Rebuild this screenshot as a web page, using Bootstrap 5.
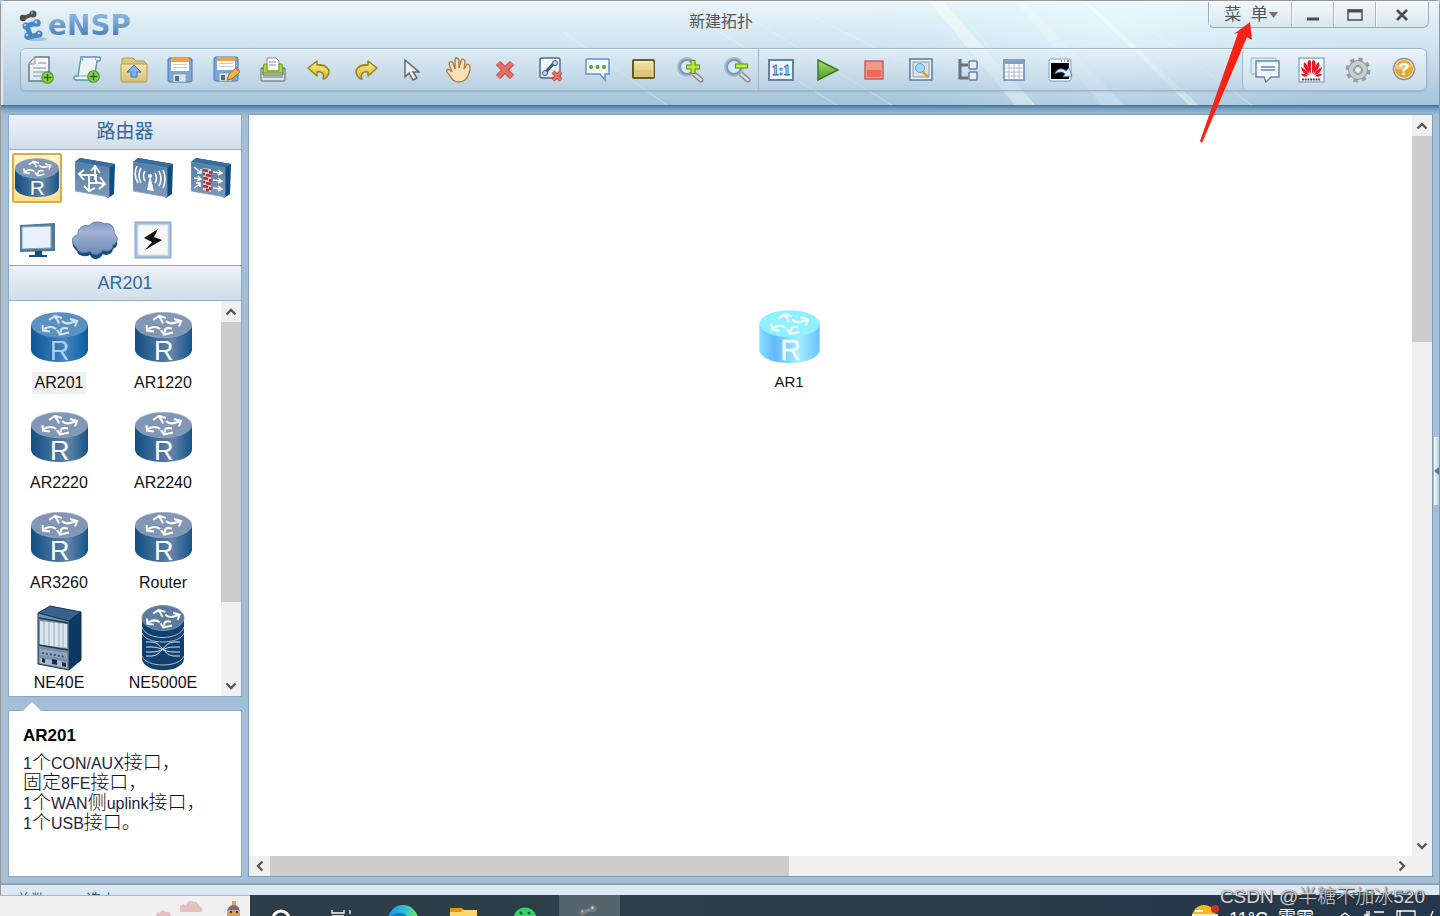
<!DOCTYPE html>
<html lang="zh-CN">
<head>
<meta charset="utf-8">
<meta name="viewport" content="width=device-width, initial-scale=1">
<title>eNSP</title>
<link href="https://cdn.jsdelivr.net/npm/bootstrap@5.3.0/dist/css/bootstrap.min.css" rel="stylesheet">
<style>
body{font-family:"Liberation Sans","Noto Sans CJK SC",sans-serif;font-size:16px;line-height:20px;color:#111;background:#a3bfd7}
button{border:0;background:none;padding:0;color:inherit}
svg{display:block;flex:none}
.app-window{border:1px solid #969696;border-width:1px 1px 0;border-radius:6px 6px 0 0}
.app-head{height:104px;background:linear-gradient(#e9f5fa,#cfe2ee 45%,#b9d1e3 75%,#a5c3db);border-top:1px solid #fff;border-left:2px solid #dcebf4}
.head-row{height:46px}
.head-side{flex:1 1 0}
.streaks{right:0;top:0;width:100%;height:100%}
.brand{font:bold 28px/32px "DejaVu Sans",sans-serif;background:linear-gradient(#86b1de 20%,#4f82ba 80%);-webkit-background-clip:text;background-clip:text;color:transparent}
.doc-title{color:#555;padding-top:10px}
.win-controls{border:1px solid #a0acb5;border-top:0;border-radius:0 0 6px 6px;background:linear-gradient(#f2f8fb,#d8e6ef);height:26px;margin-right:10px;color:#50545a}
.win-controls button{width:42px;display:flex;align-items:center;justify-content:center;border-left:1px solid #a9b7c1;box-shadow:inset 1px 0 #f7fbfd}
.win-controls .menu-btn{width:82px;border-left:0;gap:1px;font-size:17px;padding-left:2px}
.win-controls .close-btn{width:53px}
.toolbar{margin:0 12px 0 17px;height:43px;border:1px solid #9fb7ca;border-radius:6px;background:linear-gradient(rgba(232,243,249,.6),rgba(190,212,228,.5));box-shadow:inset 0 1px rgba(255,255,255,.7),0 1px 2px rgba(110,145,175,.4)}
.tools{display:flex;justify-content:space-between;align-items:center;height:100%}
.tools button{width:30px;height:30px;display:flex;align-items:center;justify-content:center}
.edit-tools{width:738px;padding:0 6px 0 5px;border-right:1px solid #a1b5c6}
.sim-tools{width:317px;padding:0 0 0 7px}
.help-tools{width:184px;padding:0 6px 0 7px;border-left:1px solid #9fb7ca;border-radius:5px;background:linear-gradient(rgba(240,247,251,.6),rgba(215,228,238,.5))}
.work-area{background:linear-gradient(#4f80a5,#79a0be 3px,#a3bfd7 9px);padding:8px 6px 6px 7px;border-top:1px solid #50748d;min-height:0}
.side{width:234px}
.side-box{background:#fff;border:1px solid #8ea8c3;min-height:0}
.side-title{height:35px;line-height:34px;font-size:18px;color:#376798;background:linear-gradient(#edf2f9,#d0deea);border-bottom:1px solid #98aec2}
.side-title.kind-title{font-size:19px}
.kinds{display:grid;grid-template-columns:repeat(4,50px);grid-auto-rows:50px;gap:12px 8px;padding:3px 3px 0;height:115px}
.kinds button{display:flex;align-items:center;justify-content:center;border:1px solid transparent;border-radius:2px}
.kinds .picked{border:2px solid #d8ac4b;background:linear-gradient(#fff3cb,#ffe08a)}
.side-title.mid-title{border-top:1px solid #8ea8c3;height:36px}
.models{display:grid;grid-template-columns:repeat(2,100px);grid-auto-rows:100px;column-gap:4px;overflow:hidden;padding-top:1px}
.models button{display:flex;flex-direction:column;align-items:center}
.pic{height:71px;display:flex;align-items:center}
.models span.picked{background:#efefef;padding:1px 3px;margin-top:-1px}
.bar{background:#f0f0f0;flex:none}
.bar-v{width:20px;padding-top:1px}
.bar-h{height:20px;padding:0 20px 0 1px}
.bar button{width:20px;height:20px;display:flex;align-items:center;justify-content:center;flex:none}
.thumb{background:#cdcdcd}
.bar-v .thumb{width:100%}
.bar-h .thumb{height:100%}
.info{height:167px;margin-top:13px;padding:15px 14px}
.info::before{content:"";position:absolute;left:14px;top:-9px;border:9px solid transparent;border-top:0;border-bottom-color:#fff}
.info h2{font-size:17px;line-height:20px;margin:0 0 8px;font-weight:bold;color:#000}
.info p{color:#23233c;margin:0}
.info i{font-style:normal;font-size:19px;line-height:10px;color:#111;font-weight:300}
.board{border:1px solid #7f9ab4;background:#fff;margin-left:6px}
.node{left:510px;top:195px;width:60px;font-size:15px}
.fold{right:0;top:436px;width:5px;height:68px;background:linear-gradient(90deg,#f8fcff,#b9d0e0)}
.status{height:12px;border-top:2px solid #9a9fa5;background:#dbe9f4;color:#2d6b9e;font-size:15px;padding:5px 15px 0;white-space:pre}
.status a{color:#2d6b9e}
.taskbar{height:21px;background:linear-gradient(90deg,#2b3c44,#2c404b 45%,#25374b);color:#fff}
.task-search{width:250px;background:#f0f0f0;border-top:1px solid #b5b5b5;flex:none}
.task-app{width:61px;height:21px;flex:none;display:flex;justify-content:center}
.task-app.active{background:#53646c}
.tray{padding-right:6px}
.weather{line-height:20px;padding:14px 0 0 10px;font-size:18px}
.stamp{right:15px;bottom:7px;font-size:19px;line-height:24px;font-weight:300;color:#d0d3d6;text-shadow:1px 1px 1px #333,0 0 1px #444}
.pointer-mark{right:188px;top:22px}
</style>
</head>
<body>
<svg width="0" height="0" class="position-absolute" aria-hidden="true">
<defs>
<linearGradient id="side"><stop offset="0" stop-color="#124f81"/><stop offset=".3" stop-color="#376896"/><stop offset=".65" stop-color="#6282a8"/><stop offset="1" stop-color="#14558a"/></linearGradient>
<linearGradient id="sideOn"><stop offset="0" stop-color="#0a5796"/><stop offset=".6" stop-color="#4484bd"/><stop offset="1" stop-color="#0a5d9f"/></linearGradient>
<linearGradient id="sideCy"><stop offset="0" stop-color="#8be0ff"/><stop offset=".25" stop-color="#62b9fb"/><stop offset=".65" stop-color="#a4edff"/><stop offset="1" stop-color="#68c2fc"/></linearGradient>
<linearGradient id="face" x2="0" y2="1"><stop offset="0" stop-color="#537da6"/><stop offset="1" stop-color="#8098ba"/></linearGradient>
<linearGradient id="paper" x2="0" y2="1"><stop offset="0" stop-color="#fff"/><stop offset="1" stop-color="#dfe5ed"/></linearGradient>
<linearGradient id="gold" x2="0" y2="1"><stop offset="0" stop-color="#fbf08e"/><stop offset="1" stop-color="#dcb52b"/></linearGradient>
<linearGradient id="tan" x2="0" y2="1"><stop offset="0" stop-color="#f4e6ac"/><stop offset="1" stop-color="#d8bd73"/></linearGradient>
<linearGradient id="green" x2="0" y2="1"><stop offset="0" stop-color="#b0df7a"/><stop offset="1" stop-color="#409b1d"/></linearGradient>
<linearGradient id="cloudG" x2="0" y2="1"><stop offset="0" stop-color="#7899c2"/><stop offset=".3" stop-color="#a3b3d2"/><stop offset="1" stop-color="#6c8ab6"/></linearGradient>
<linearGradient id="edgeG" x2="1" y2="0"><stop offset="0" stop-color="#1797dd"/><stop offset=".6" stop-color="#33c3cd"/><stop offset="1" stop-color="#7ae85b"/></linearGradient>
<symbol id="swirl" viewBox="0 0 57 25"><path d="M28 11.500Q27 8 24 5M18 8 24 4 31 6M31 9Q35 13.500 44 9.500M39 7 46 9 44 14.500M25 17Q20 13 13 17M11.500 13 12 18.500 19 19.500M37 16.500Q29 14.500 30 20.500M26 18 29 22.500 38 20.500" fill="none" stroke="#fff" stroke-width="2.100"/></symbol>
<symbol id="router" viewBox="0 0 57 51"><path d="M0 13V38C2 54 55 54 57 38V13Z" fill="url(#side)"/><ellipse cx="28.500" cy="13" rx="28.300" ry="12.700" fill="#8296b5" stroke="#a3b1c7" stroke-width=".6"/><use href="#swirl" width="57" height="25"/><text x="19" y="47.500" font-size="27" fill="#fff" font-family="Liberation Sans">R</text></symbol>
<symbol id="routerOn" viewBox="0 0 57 51"><path d="M0 13V38C2 54 55 54 57 38V13Z" fill="url(#sideOn)"/><ellipse cx="28.500" cy="13" rx="28.300" ry="12.700" fill="#5b91c2"/><g opacity=".75"><use href="#swirl" width="57" height="25"/><text x="19" y="47.500" font-size="27" fill="#d4eeff" font-family="Liberation Sans">R</text></g></symbol>
<symbol id="routerCy" viewBox="0 0 57 51"><path d="M0 13V38C2 54 55 54 57 38V13Z" fill="url(#sideCy)"/><ellipse cx="28.500" cy="13" rx="28.300" ry="12.700" fill="#8ff1ff"/><g opacity=".9"><use href="#swirl" width="57" height="25"/><text x="20" y="47.500" font-size="27" fill="#fff" stroke="#fff" stroke-width=".3" font-family="Liberation Sans">R</text></g></symbol>
<symbol id="slab" viewBox="0 0 40 40"><path d="M0 4 5 0 40 6 39 36 33 40Z" fill="#0d4d83"/><path d="M0 4 5 0 40 6 34 10Z" fill="#386d9e"/><path d="M0 4 34 10V39L0 33Z" fill="url(#face)" stroke="#7e9dbb" stroke-width=".7"/></symbol>
<symbol id="lens" viewBox="0 0 28 28"><path d="m17 17 8 7" stroke="#858585" stroke-width="5" stroke-linecap="round"/><path d="m18 18 7 6" stroke="#ddd" stroke-width="2.500" stroke-linecap="round"/><circle cx="11" cy="11" r="8.500" fill="#d8e9f7" stroke="#b3b7ba" stroke-width="3"/><circle cx="11" cy="11" r="7" fill="none" stroke="#6b9bd0" stroke-width="2"/></symbol>
<symbol id="plusdot" viewBox="0 0 12 12"><circle cx="6" cy="6" r="5.300" fill="#8ace51" stroke="#479322"/><path d="M6 2.500v7M2.500 6h7" stroke="#256e12" stroke-width="1.300"/></symbol>
<symbol id="undo" viewBox="0 0 24 22"><path d="m1 9 9-7v4c9-1 14 5 11 10q-2 4-5 4c2-5-1-8-6-7v4Z" fill="url(#gold)" stroke="#94821d" stroke-width="1.500" stroke-linejoin="round"/></symbol>
<symbol id="up" viewBox="0 0 12 8"><path d="M1.500 6.500 6 2l4.500 4.500" fill="none" stroke="#555" stroke-width="2.300"/></symbol>
<symbol id="floppy" viewBox="0 0 26 26"><rect x="1" y="1" width="24" height="24" rx="2" fill="#78a7dd" stroke="#4577b2"/><path d="M4 1h18v13H4z" fill="#fff"/><path d="M4 1h18v4H4z" fill="#f4a03e"/><path d="M6 7.500h14M6 10.500h14" stroke="#cacaca"/><path d="M6 17h13v8H6z" fill="#dfe0df" stroke="#8194a7" stroke-width=".6"/><path d="M8 19h4v5H8z" fill="#596d83"/></symbol>
<symbol id="bone" viewBox="0 0 20 12"><path d="m5 8 10-4" stroke="#888" stroke-width="4"/><g fill="#77797b"><circle cx="4" cy="8" r="3.500"/><circle cx="15.500" cy="4" r="3.700"/></g><circle cx="15" cy="3" r="1.500" fill="#ccc"/><circle cx="4" cy="7" r="1.200" fill="#bbb"/></symbol>
</defs></svg>

<div class="vh-100 d-flex flex-column overflow-hidden">
<div class="app-window d-flex flex-column flex-grow-1 position-relative" style="min-height:0">
<header class="app-head position-relative flex-shrink-0">
<svg class="streaks position-absolute" viewBox="0 0 1437 104" preserveAspectRatio="xMaxYMid slice" aria-hidden="true">
<defs><radialGradient id="glow"><stop offset="0" stop-color="#eafaff" stop-opacity=".65"/><stop offset="1" stop-color="#d7f3fb" stop-opacity="0"/></radialGradient></defs>
<ellipse cx="1110" cy="20" rx="260" ry="130" fill="url(#glow)"/>
<g fill="#fff"><path d="M927 0h14l92 104h-20Z" opacity=".4"/><path d="M1013 0h9l100 104h-22Z" opacity=".2"/><path d="M1081 0h4l112 104h-10Z" opacity=".35"/></g>
<g stroke="#e5fbff" opacity=".45"><path d="m950 0 82 104M1085 0l104 104M560 30l105 74M700 20l135 84M720 0l170 104M780 0l120 60M1150 30l100 74"/></g></svg>
<div class="head-row position-relative d-flex justify-content-between align-items-start">
<div class="head-side d-flex align-items-center pt-2">
<svg class="ms-3" width="29" height="32" viewBox="0 0 29 32"><ellipse cx="18" cy="29" rx="10" ry="2" fill="#a3c2dc"/><path d="m5 8 9-4" stroke="#555" stroke-width="4"/><g fill="#4b4d4e"><circle cx="4" cy="8" r="3.200"/><circle cx="14" cy="4" r="3.500"/></g><circle cx="13" cy="3" r="1.300" fill="#999"/><g fill="none" stroke="#4a87c4" stroke-width="5" stroke-linecap="round"><path d="m7 16 11-3M8 17l3 7M10 27l9-2"/></g><g fill="#4a85c2"><circle cx="7" cy="16" r="3.500"/><circle cx="18" cy="13" r="3.700"/><circle cx="9" cy="26" r="3.700"/><circle cx="20" cy="24" r="3.500"/></g><g fill="#a9d0f2"><circle cx="17" cy="12" r="1.500"/><circle cx="6" cy="15" r="1.300"/><circle cx="8" cy="25" r="1.300"/><circle cx="20" cy="23" r="1.300"/></g></svg>
<span class="brand">eNSP</span></div>
<div class="doc-title">新建拓扑</div>
<div class="head-side d-flex justify-content-end"><div class="win-controls d-flex">
<button class="menu-btn" type="button">菜&nbsp; 单<svg width="9" height="6"><path d="M0 0h9L4.500 6Z" fill="#6e7278"/></svg></button>
<button type="button" aria-label="最小化"><svg width="14" height="14"><path d="M1 11h12" stroke="#4b4b55" stroke-width="3"/></svg></button>
<button type="button" aria-label="最大化"><svg width="16" height="14"><path d="M1 2h14v10H1Z" fill="none" stroke="#4b4b55" stroke-width="1.500"/><path d="M1 3h14" stroke="#4b4b55" stroke-width="3"/></svg></button>
<button class="close-btn" type="button" aria-label="关闭"><svg width="14" height="14"><path d="m2 2 10 10M12 2 2 12" stroke="#4b4b55" stroke-width="2.600"/></svg></button>
</div></div></div>
<div class="toolbar position-relative d-flex justify-content-between">
<div class="d-flex">
<div class="tools edit-tools">
<button type="button" aria-label="新建拓扑"><svg width="26" height="28" viewBox="0 0 26 28"><path d="M7 1h14v24H1V8Z" fill="url(#paper)" stroke="#65788f" stroke-width="1.500"/><path d="M7 1v7H1" fill="#e5e8ec" stroke="#8494a6"/><path d="M10 7h8M5 12h13M5 16h13M5 20h8" stroke="#a6afba" stroke-width="1.500"/><use href="#plusdot" x="13" y="15" width="13" height="13"/></svg></button>
<button type="button" aria-label="新建试卷"><svg width="28" height="27" viewBox="0 0 28 27"><path d="M8 1h18c2 1 2 3 0 4h-2L21 24H3c-3-1-3-3 0-4h2Z" fill="#eaf5fa" stroke="#5d94b0" stroke-width="1.400"/><path d="M4 20h17M8 1c2 1 2 3 1 4M24 5c-2-1-2-2-1-3" stroke="#82a8be" fill="none"/><use href="#plusdot" x="14" y="14" width="13" height="13"/></svg></button>
<button type="button" aria-label="打开"><svg width="28" height="26" viewBox="0 0 28 26"><path d="M2 4V2l2-1h9l3 3h8l2 2v18H2Z" fill="#e0c77f" stroke="#b59a4c"/><path d="M1 7h26v16q0 2-2 2H3q-2 0-2-2Z" fill="url(#tan)" stroke="#b59a4c"/><path d="m14 8 7 7h-4v5h-6v-5H7Z" fill="#78b5f8" stroke="#3e71bb"/></svg></button>
<button type="button" aria-label="保存"><svg width="26" height="26"><use href="#floppy"/></svg></button>
<button type="button" aria-label="另存为"><svg width="27" height="27"><use href="#floppy" width="26" height="26"/><path d="m14 24 2-6 7-6 4 4-8 7Z" fill="#f5b735" stroke="#a26a23"/><path d="m23 12 4 4" stroke="#dc725f" stroke-width="2"/></svg></button>
<button type="button" aria-label="打印"><svg width="26" height="25"><path d="M7 1h9l3 3v10H7z" fill="#fff" stroke="#888"/><path d="M9 5h7M9 8h7" stroke="#888"/><path d="M4 7h3v7h12V7h3l2 9H2Z" fill="#a8d938" stroke="#6b9c18"/><path d="M1 11h2v7h20v-7h2v12q0 1-1 1H2q-1 0-1-1Z" fill="#dfe2e8" stroke="#586473"/><path d="M3 20h20" stroke="#777"/></svg></button>
<button type="button" aria-label="撤销"><svg width="24" height="22"><use href="#undo"/></svg></button>
<button type="button" aria-label="恢复"><svg width="24" height="22"><use href="#undo" transform="matrix(-1 0 0 1 24 0)"/></svg></button>
<button type="button" aria-label="选择"><svg width="16" height="22"><path d="M1 1v17l4-4 4 7 4-2-4-6h6Z" fill="#ededed" stroke="#64676d" stroke-width="1.500"/></svg></button>
<button type="button" aria-label="拖动"><svg width="25" height="26" viewBox="0 0 25 26"><path d="m7 23-6-8c-1-2 1-4 4-1l1 1L3 7c0-3 3-3 4-1l2 6V3c0-3 3-3 4 0v8l2-7c1-3 4-2 4 1l-1 7 2-3c1-3 4-2 4 1q0 8-5 13-6 4-12 0Z" fill="#fae0b5" stroke="#a87946" stroke-width="1.300"/></svg></button>
<button type="button" aria-label="删除"><svg width="20" height="20"><path d="m3 3 14 14M17 3 3 17" stroke="#bd4644" stroke-width="6"/><path d="m3 3 14 14M17 3 3 17" stroke="#ee6e64" stroke-width="4"/></svg></button>
<button type="button" aria-label="删除连线"><svg width="25" height="25"><rect x="1" y="1" width="20" height="20" rx="2" fill="url(#paper)" stroke="#4f6c8c" stroke-width="1.500"/><path d="m6 16 9-10" stroke="#345984" stroke-width="3"/><g fill="#b8daf8" stroke="#355f98"><circle cx="6" cy="16" r="2.500"/><circle cx="16" cy="6" r="2.500"/></g><path d="m14 15 8 8M22 15l-8 8" stroke="#b73732" stroke-width="4"/><path d="m14 15 8 8M22 15l-8 8" stroke="#f07064" stroke-width="2.500"/></svg></button>
<button type="button" aria-label="文本"><svg width="25" height="24"><path d="M2 1h21q1 0 1 1v14H20v6l-5-6H1V2q0-1 1-1Z" fill="#f2f8ff" stroke="#6790c4" stroke-width="1.500"/><g fill="#58a432"><circle cx="6" cy="9" r="2"/><circle cx="12.500" cy="9" r="2"/><circle cx="19" cy="9" r="2"/></g></svg></button>
<button type="button" aria-label="调色板"><svg width="24" height="21"><rect x="1" y="1" width="21" height="18" rx="1" fill="url(#tan)" stroke="#655a28" stroke-width="2"/><path d="M3 11h18v6H3Z" fill="#dbc577"/><path d="M3 3h18v15" fill="none" stroke="#fff4bd"/></svg></button>
<button type="button" aria-label="放大"><svg width="28" height="28"><use href="#lens"/><path d="M17 4v14M10 11h14" stroke="#58901a" stroke-width="5"/><path d="M17 5v12M11 11h12" stroke="#baea2b" stroke-width="3"/></svg></button>
<button type="button" aria-label="缩小"><svg width="28" height="28"><use href="#lens"/><path d="M12 10h13" stroke="#58901a" stroke-width="5"/><path d="M13 10h11" stroke="#c4ec37" stroke-width="3"/></svg></button>
</div>
<div class="tools sim-tools">
<button type="button" aria-label="重置缩放"><svg width="28" height="24"><rect x="2" y="2" width="24" height="20" fill="#eff4f9" stroke="#6881a0" stroke-width="2"/><text x="14" y="17" text-anchor="middle" font-family="Liberation Serif" font-weight="bold" font-size="14" fill="#a9d2ff" stroke="#3571b5" stroke-width=".8">1:1</text></svg></button>
<button type="button" aria-label="开启设备"><svg width="22" height="22"><path d="m1 1 20 10L1 21Z" fill="url(#green)" stroke="#397824" stroke-width="1.500"/></svg></button>
<button type="button" aria-label="停止设备"><svg width="20" height="20"><rect x="1" y="1" width="18" height="18" fill="#f0968c" stroke="#c1645f" stroke-width="1.500"/><path d="M3 10h14v7H3Z" fill="#ed6859"/></svg></button>
<button type="button" aria-label="数据抓包"><svg width="24" height="24"><rect x="1" y="1" width="22" height="21" fill="#eef3f8" stroke="#587aa3" stroke-width="1.500"/><rect x="4" y="4" width="16" height="15" fill="#d9e0e6" stroke="#8a9bac"/><path d="m13 13 6 6" stroke="#d7a340" stroke-width="2.500"/><circle cx="11" cy="10" r="4.500" fill="#9adcf9" stroke="#6fa2c2"/></svg></button>
<button type="button" aria-label="显示所有接口"><svg width="20" height="22"><path d="M2 0v19h8M2 6h8" fill="none" stroke="#6a7178" stroke-width="3"/><g fill="#e4edf5" stroke="#67809d" stroke-width="1.500"><rect x="11" y="2" width="8" height="8" rx="1"/><rect x="11" y="13" width="8" height="8" rx="1"/></g></svg></button>
<button type="button" aria-label="显示网格"><svg width="22" height="22"><rect x="1" y="1" width="20" height="20" fill="#fff" stroke="#6588b5" stroke-width="1.500"/><path d="M2 2h18v3H2Z" fill="#7fa2cd"/><path d="M2 9h18M2 13h18M2 17h18M6 5v15M11 5v15M16 5v15" stroke="#a9bbd1"/></svg></button>
<button type="button" aria-label="打开拓扑设备"><svg width="25" height="24"><rect x="1" y="1" width="22" height="22" rx="2" fill="#fff" stroke="#7c9fc8"/><path d="M3 5h18v16H3Z" fill="#000"/><path d="M13 3h1M16 3h1M19 3h2" stroke="#d14646" stroke-width="1.500"/><path d="M7 16c1-5 7-7 11-3l3-3 3 8-9 1 2-3c-3-3-7-2-10 0Z" fill="#d9edff" stroke="#47749f" stroke-width=".8"/></svg></button>
</div></div>
<div class="tools help-tools">
<button type="button" aria-label="论坛"><svg width="30" height="26"><rect x="1" y="1" width="25" height="16" rx="1" fill="#deebf5" stroke="#92b3ca"/><path d="M6 4h23v16h-8l-5 5-2-5H6Z" fill="#f3f8fd" stroke="#6384aa" stroke-width="1.400"/><path d="M11 10h14M11 13h14" stroke="#5c8cc0" stroke-width="1.400"/></svg></button>
<button type="button" aria-label="官网"><svg width="27" height="26" viewBox="0 0 27 26"><rect x="1" y="1" width="25" height="24" fill="#f6f9fc" stroke="#8daed2" stroke-width="1.500"/><g fill="#e71724"><path d="M13 17Q7 6 11 3q2 0 2 2ZM14 17Q20 6 16 3q-2 0-2 2ZM12 17Q4 11 6 5q4 2 6 12ZM15 17q8-6 6-12-4 2-6 12ZM11 18Q4 17 3 10q6 3 8 8ZM16 18q7-1 8-8-6 3-8 8ZM10 19q-5 2-7-2 4-1 7 2ZM17 19q5 2 7-2-4-1-7 2Z"/></g><path d="M4 22.500h19" stroke="#555" stroke-width="2" stroke-dasharray="2 .7"/></svg></button>
<button type="button" aria-label="选项"><svg width="26" height="26"><circle cx="13" cy="13" r="10.500" fill="none" stroke="#94a1a4" stroke-width="4" stroke-dasharray="4.250 4"/><circle cx="13" cy="13" r="7" fill="none" stroke="#8d999c" stroke-width="6"/><circle cx="13" cy="13" r="7" fill="none" stroke="#c6d0d2" stroke-width="4"/><circle cx="13" cy="13" r="3.500" fill="#e5eff5" stroke="#7f8b90"/></svg></button>
<button type="button" aria-label="帮助"><svg width="25" height="25"><circle cx="12" cy="12" r="10.500" fill="#f8f3e3" stroke="#929292" stroke-width="1.500"/><circle cx="12" cy="12" r="9" fill="#e5a736"/><path d="M4 9q8-7 16 0-5 5-16 3Z" fill="#f1c875"/><text x="12" y="18" text-anchor="middle" font-family="Liberation Sans" font-weight="bold" font-size="17" fill="#fff">?</text></svg></button>
</div></div>
</header>

<main class="work-area d-flex flex-grow-1">
<aside class="side d-flex flex-column flex-shrink-0">
<section class="side-box d-flex flex-column flex-grow-1">
<div class="side-title kind-title text-center flex-shrink-0">路由器</div>
<div class="kinds flex-shrink-0">
<button class="picked" type="button" aria-label="路由器"><svg width="44" height="40"><use href="#router"/></svg></button>
<button type="button" aria-label="交换机"><svg width="40" height="40"><use href="#slab"/><g fill="none" stroke="#fff" stroke-width="1.900"><path d="M20 22V9M16 13l4-5 5 7M14 26V33M9 28l5 5 6-3M14 17H5M9 12l-5 4 5 6M20 24l9 2M25 19l5 7-6 5"/><path d="M14 17h7v8h-7Z"/></g></svg></button>
<button type="button" aria-label="无线局域网"><svg width="40" height="40"><use href="#slab"/><path d="M14 32 17 18 21 33Z" fill="#fff"/><circle cx="17" cy="18" r="2" fill="#fff"/><path d="M12 13q-3 5 0 10M8 10q-4 7 0 15M4 8q-4 9 1 17M22 15q3 5 0 10M26 13q4 8 0 15M30 12q4 9 0 18" fill="none" stroke="#fff" stroke-width="1.600"/></svg></button>
<button type="button" aria-label="防火墙"><svg width="40" height="40"><use href="#slab"/><path d="m12 10 8 1v23l-8-2Z" fill="#d6d5da"/><path d="m12 12 5 1M18 14l3 1M12 16l2 0M15 17l5 1M12 20l5 1M18 22l3 1M12 24l2 0M15 25l5 1M12 28l5 1M18 30l3 1M15 32h3" stroke="#b82933" stroke-width="2.600"/><path d="m3 9 6 5M3 20l6 1M3 30l6-4M6 15h4v-4M6 23l4-2-3-3M9 29v-4H5M22 14l8 1M22 22l8 1M22 30l8 1M27 12l4 3-4 2M27 20l4 3-4 2M27 28l4 3-4 2" stroke="#fff" stroke-width="1.500" fill="none"/></svg></button>
<button type="button" aria-label="终端"><svg width="37" height="36"><path d="M1 3 36 1V29L1 30Z" fill="#52779d"/><path d="M3 5 32 4V26L3 27Z" fill="#e8f1fb" stroke="#84a2bf"/><path d="M16 29h7v4h5v2H10v-2h6Z" fill="#174d7f"/></svg></button>
<button type="button" aria-label="其他设备"><svg width="46" height="38"><path d="M5 28C-3 21 1 15 6 15 5 8 12 5 17 7c4-7 13-5 15-2 6-2 11 3 10 8 5 5 4 11-1 13-1 6-7 7-10 5-4 7-11 6-13 1-6 3-13 0-13-4Z" fill="#164e82" transform="translate(0 2)"/><path d="M5 27C-3 20 1 14 6 14 5 7 12 3 17 5c4-6 13-4 15-2 6-2 11 3 10 9 5 5 4 9-1 12-1 6-7 7-10 5-4 6-11 5-13 1-6 3-13 1-13-3Z" fill="url(#cloudG)" stroke="#5f86b2"/></svg></button>
<button type="button" aria-label="设备连线"><svg width="38" height="38"><rect x="1" y="1" width="36" height="36" fill="#a5bedb" stroke="#8ba6c7"/><rect x="4" y="4" width="30" height="30" fill="#f8f8f7" stroke="#d7e3ef"/><path d="M24 8 10 17 18 21 11 29 28 19 20 16Z" fill="#101010"/></svg></button>
</div>
<div class="side-title mid-title text-center flex-shrink-0">AR201</div>
<div class="d-flex flex-grow-1" style="min-height:0">
<div class="models flex-grow-1">
<button type="button"><span class="pic"><svg width="57" height="51"><use href="#routerOn"/></svg></span><span class="picked">AR201</span></button>
<button type="button"><span class="pic"><svg width="57" height="51"><use href="#router"/></svg></span><span>AR1220</span></button>
<button type="button"><span class="pic"><svg width="57" height="51"><use href="#router"/></svg></span><span>AR2220</span></button>
<button type="button"><span class="pic"><svg width="57" height="51"><use href="#router"/></svg></span><span>AR2240</span></button>
<button type="button"><span class="pic"><svg width="57" height="51"><use href="#router"/></svg></span><span>AR3260</span></button>
<button type="button"><span class="pic"><svg width="57" height="51"><use href="#router"/></svg></span><span>Router</span></button>
<button type="button"><span class="pic"><svg width="45" height="66"><path d="m1 8 12-7 31 6-12 9Z" fill="#38618d" stroke="#163456"/><path d="m32 16 12-9v48L32 65Z" fill="#0d3965" stroke="#163456"/><path d="m1 8 31 8v49L1 59Z" fill="#7890a9" stroke="#183756"/><path d="m3 16 27 3v24L3 40Z" fill="#dbe5ed"/><path d="M7 16v24M12 17v24M17 17v25M22 18v25M26 19v24" stroke="#9aabbb"/><path d="m2 13 29 5M2 40l29 5" stroke="#20384f" stroke-width="1.500"/><path d="m3 44 27 4v6L3 50Z" fill="#91a6bb"/><path d="m5 48 24 4" stroke="#37536e" stroke-width="2" stroke-dasharray="2 2"/><path d="m3 53 27 4v6L3 58Z" fill="#aab9c6"/><path d="m5 53 3 1v4l-3-1ZM15 54l5 1v5l-5-1ZM25 57l4 1v4l-4-1Z" fill="#192c40"/></svg></span><span>NE40E</span></button>
<button type="button"><span class="pic"><svg width="44" height="66"><path d="M1 14V54C3 69 41 69 43 54V14Z" fill="#10406e"/><ellipse cx="22" cy="13" rx="21" ry="12.500" fill="#5d7ca2" stroke="#768fb0"/><use href="#swirl" x="-5" y="1" width="54" height="24"/><path d="M1 22C5 36 39 36 43 22M1 28C5 40 39 40 43 28M1 51C5 63 39 63 43 51" fill="none" stroke="#a9bed3"/><path d="M5 37h6c9 0 12 14 22 14h6M5 42h6c9 0 12 5 22 5h6M5 47h6c9 0 12-5 22-5h6M5 51h6c9 0 12-14 22-14h6" fill="none" stroke="#d6e1eb"/></svg></span><span>NE5000E</span></button>
</div>
<div class="bar bar-v d-flex flex-column">
<button type="button" aria-label="向上滚动"><svg width="12" height="8"><use href="#up"/></svg></button><div class="flex-grow-1"><div class="thumb" style="height:79%"></div></div><button type="button" aria-label="向下滚动"><svg width="12" height="8"><use href="#up" transform="rotate(180 6 4)"/></svg></button></div>
</div></section>
<section class="side-box info position-relative flex-shrink-0"><h2>AR201</h2><p>1<i>个</i>CON/AUX<i>接口，</i><br><i>固定</i>8FE<i>接口，</i><br>1<i>个</i>WAN<i>侧</i>uplink<i>接口，</i><br>1<i>个</i>USB<i>接口。</i></p></section>
</aside>
<section class="board d-flex flex-column flex-grow-1">
<div class="d-flex flex-grow-1" style="min-height:0">
<div class="position-relative flex-grow-1 overflow-hidden"><div class="node position-absolute d-flex flex-column align-items-center gap-2"><svg width="61" height="54"><use href="#routerCy"/></svg><span>AR1</span></div></div>
<div class="bar bar-v d-flex flex-column"><button type="button" aria-label="向上滚动"><svg width="12" height="8"><use href="#up"/></svg></button><div class="flex-grow-1"><div class="thumb" style="height:29.4%"></div></div><button type="button" aria-label="向下滚动"><svg width="12" height="8"><use href="#up" transform="rotate(180 6 4)"/></svg></button></div>
</div>
<div class="bar bar-h d-flex"><button type="button" aria-label="向左滚动"><svg width="8" height="12"><path d="M6.500 1.500 2 6l4.500 4.500" fill="none" stroke="#555" stroke-width="2.300"/></svg></button><div class="flex-grow-1"><div class="thumb" style="width:46.3%"></div></div><button type="button" aria-label="向右滚动"><svg width="8" height="12"><path d="M1.500 1.500 6 6l-4.500 4.500" fill="none" stroke="#555" stroke-width="2.300"/></svg></button></div>
</section>
</main>
<button class="fold position-absolute" type="button" aria-label="展开"><svg width="5" height="8"><path d="M5 0v8L0 4Z" fill="#537fa4"/></svg></button>
<footer class="status d-flex justify-content-between flex-shrink-0 overflow-hidden"><span>总数：  1  选中：  0</span><a href="#">获取帮助与反馈</a></footer>
</div>
<nav class="taskbar d-flex flex-shrink-0 overflow-hidden">
<div class="task-search"><svg width="250" height="20"><g fill="#e5bfc2"><path d="M180 16v-6q4-3 6 0 2-7 8-4 3-2 5 4 4 1 3 6Z"/><path d="M156 20q1-5 4-3 2-5 6-1 4-1 5 4Z"/></g><path d="M232 5h4v5h-4Z" fill="#dba64c"/><path d="M227 18q0-9 7-9 6 0 6 9Z" fill="#756c96"/><path d="M227 14h13v6h-13Z" fill="#d5a35f"/><path d="M230 16h2M236 16h2" stroke="#333" stroke-width="2"/></svg></div>
<div class="task-app"><svg width="24" height="21"><circle cx="12" cy="24" r="8" fill="none" stroke="#fff" stroke-width="3"/></svg></div>
<div class="task-app"><svg width="24" height="21"><path d="M2 15v3h12v-3M2 21h12M20 15v4" fill="none" stroke="#fff" stroke-width="1.300"/></svg></div>
<div class="task-app"><svg width="32" height="21"><circle cx="16" cy="25" r="15" fill="url(#edgeG)"/><path d="M1 25q5-9 14-7 7 2 5 8H1Z" fill="#1481cf"/></svg></div>
<div class="task-app"><svg width="30" height="21"><path d="M1 13h12l2 2v6H1Z" fill="#dc9a0a"/><path d="M1 17h11l2-2h14v7H1Z" fill="#ffd66b"/></svg></div>
<div class="task-app"><svg width="24" height="21"><circle cx="12" cy="24" r="11.500" fill="#35d16a"/><circle cx="8" cy="18" r="1.500" fill="#13602e"/><circle cx="16" cy="18" r="1.500" fill="#13602e"/></svg></div>
<div class="task-app active ms-1"><svg width="30" height="21"><use href="#bone" x="3" y="10" width="20" height="11"/></svg></div>
<div class="tray ms-auto d-flex"><svg width="30" height="21"><circle cx="15" cy="22" r="12" fill="#fbb619"/><path d="M3 19h26v3H3Z" fill="#f9eed2"/><path d="M6 16h8" stroke="#fff" stroke-width="2"/><circle cx="26" cy="14" r="4" fill="#ce3023"/></svg><span class="weather">11°C&nbsp; 雾霾</span><svg width="120" height="21"><path d="m27 21 4-3 4 3M50 20h5v-4M53 16v5M60 17h10M83 21v-5h18v5M86 16v5M117 21l2-5" fill="none" stroke="#fff" stroke-width="1.300"/></svg></div>
</nav></div>
<div class="stamp position-absolute">CSDN @半糖不加冰520</div>
<svg class="pointer-mark position-absolute" width="52" height="121" viewBox="0 0 52 121" aria-hidden="true"><path d="M50 0 52 18 47 15 2 121 0 119 38 11 34 12Z" fill="#fa2215"/></svg>
<script src="https://cdn.jsdelivr.net/npm/bootstrap@5.3.0/dist/js/bootstrap.bundle.min.js"></script>
</body>
</html>
